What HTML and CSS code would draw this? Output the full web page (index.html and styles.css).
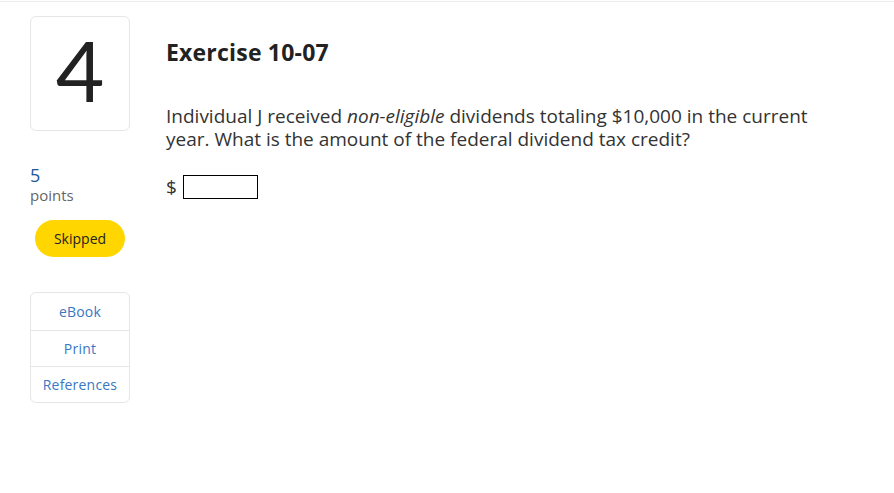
FILE: index.html
```html
<!DOCTYPE html>
<html>
<head>
<meta charset="utf-8">
<link rel="stylesheet" href="styles.css">
</head>
<body>
<div class="topline"></div>
<div class="layout">
  <aside class="side">
    <div class="qnum">4</div>
    <div class="points">
      <div class="pts-val">5</div>
      <div class="pts-label">points</div>
    </div>
    <div class="status">Skipped</div>
    <ul class="resources">
      <li>eBook</li>
      <li>Print</li>
      <li>References</li>
    </ul>
  </aside>
  <main class="main">
    <h1 class="title">Exercise 10-07</h1>
    <p class="question">Individual J received <em>non-eligible</em> dividends totaling $10,000 in the current year. What is the amount of the federal dividend tax credit?</p>
    <div class="answer"><span class="dollar">$</span><span class="input"></span></div>
  </main>
</div>
</body>
</html>
```
FILE: styles.css
```css
html, body {
  margin: 0;
  padding: 0;
  background: #fff;
  font-family: "Open Sans", "Lato", sans-serif;
}
.topline {
  height: 1px;
  margin-top: 1px;
  background: #ececec;
}
.layout {
  display: flex;
  gap: 36px;
  padding: 14px 0 0 30px;
}
.side {
  width: 100px;
  flex: none;
  display: flex;
  flex-direction: column;
}
.qnum {
  box-sizing: border-box;
  width: 100px;
  height: 115px;
  padding-bottom: 8px;
  border: 1px solid #e6e6e6;
  border-radius: 6px;
  display: flex;
  align-items: center;
  justify-content: center;
  font-family: "Lato", sans-serif;
  font-size: 84px;
  color: #222;
  line-height: 1;
}
.points {
  margin-top: 33px;
}
.pts-val {
  font-size: 18px;
  color: #1e559b;
  line-height: 22px;
}
.pts-label {
  font-size: 15px;
  color: #666;
  line-height: 18px;
}
.status {
  margin: 16px 0 0 5px;
  width: 90px;
  height: 37px;
  border-radius: 19px;
  background: #ffd600;
  color: #222;
  font-size: 14px;
  display: flex;
  align-items: center;
  justify-content: center;
}
.resources {
  list-style: none;
  margin: 35px 0 0 0;
  padding: 0;
  border: 1px solid #e6e6e6;
  border-radius: 6px;
}
.resources li {
  height: 35px;
  display: flex;
  align-items: center;
  justify-content: center;
  font-size: 14px;
  letter-spacing: 0.2px;
  color: #3b77c2;
  border-top: 1px solid #e6e6e6;
}
.resources li:first-child {
  border-top: none;
  height: 37px;
}
.main {
  flex: 1;
}
.title {
  margin: 22px 0 0 0;
  font-size: 23px;
  font-weight: 700;
  letter-spacing: 0.2px;
  color: #222;
  line-height: 28px;
}
.question {
  margin: 39px 0 0 0;
  font-size: 19px;
  line-height: 23px;
  color: #333;
  max-width: 680px;
}
.question em {
  font-style: italic;
}
.answer {
  margin-top: 23px;
  display: flex;
  align-items: center;
  gap: 6px;
}
.dollar {
  font-size: 19px;
  color: #333;
}
.input {
  box-sizing: border-box;
  width: 75px;
  height: 24px;
  border: 1px solid #000;
}
```
